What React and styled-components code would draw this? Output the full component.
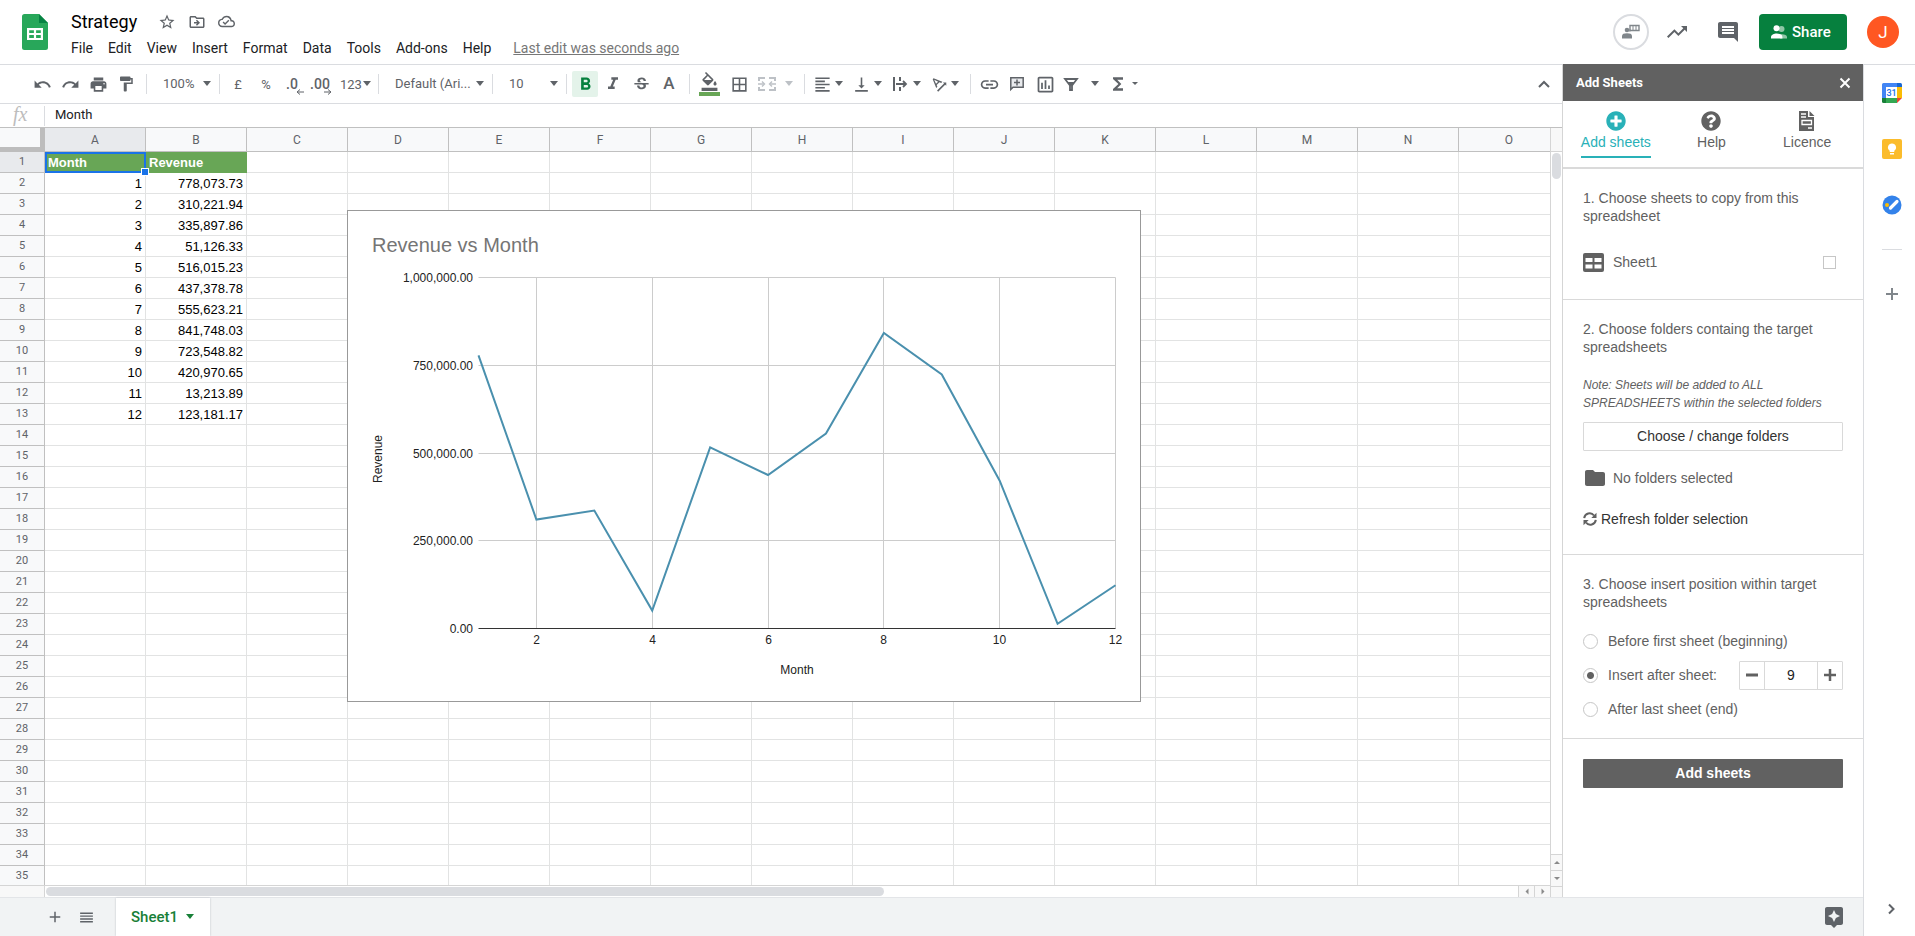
import React, { useState } from "react";
import styled, { createGlobalStyle, css } from "styled-components";
import {
  MdAdd,
  MdAssistant,
  MdBorderAll,
  MdComment,
  MdFormatAlignLeft,
  MdFormatBold,
  MdFormatColorFill,
  MdFormatItalic,
  MdFormatPaint,
  MdFunctions,
  MdInsertLink,
  MdOutlineCloudDone,
  MdOutlineDriveFileMove,
  MdOutlineInsertChart,
  MdPrint,
  MdRedo,
  MdReorder,
  MdStarBorder,
  MdStrikethroughS,
  MdTextRotationAngleup,
  MdTrendingUp,
  MdUndo,
  MdVerticalAlignBottom,
  MdFolder,
} from "react-icons/md";
import { FaPlusCircle, FaQuestionCircle } from "react-icons/fa";

const revenue = [
  778073.73, 310221.94, 335897.86, 51126.33, 516015.23, 437378.78, 555623.21,
  841748.03, 723548.82, 420970.65, 13213.89, 123181.17,
];

const menus = [
  "File",
  "Edit",
  "View",
  "Insert",
  "Format",
  "Data",
  "Tools",
  "Add-ons",
  "Help",
];

const columns = "ABCDEFGHIJKLMNO".split("");
const rows = Array.from({ length: 35 }, (_, i) => i + 1);

const formatMoney = (value) =>
  value.toLocaleString("en-GB", {
    minimumFractionDigits: 2,
    maximumFractionDigits: 2,
  });

export default function App() {
  return (
    <Page>
      <GlobalStyle />
      <Header />
      <Body>
        <Workspace>
          <Panels>
            <Editor>
              <Toolbar />
              <FormulaBar>
                <Fx htmlFor="formula">fx</Fx>
                <FormulaInput id="formula" defaultValue="Month" />
              </FormulaBar>
              <Sheet />
            </Editor>
            <AddSheets />
          </Panels>
          <BottomBar>
            <BottomButton aria-label="Add sheet">
              <MdAdd size={18} />
            </BottomButton>
            <BottomButton aria-label="All sheets">
              <MdReorder size={17} />
            </BottomButton>
            <SheetTab>
              Sheet1
              <Caret />
            </SheetTab>
            <ExploreButton aria-label="Explore">
              <MdAssistant size={24} />
            </ExploreButton>
          </BottomBar>
        </Workspace>
        <AppRail />
      </Body>
    </Page>
  );
}

function Header() {
  return (
    <TopBar>
      <SheetsLogo />
      <Titles>
        <TitleRow>
          <DocTitle>Strategy</DocTitle>
          <PlainButton aria-label="Star">
            <MdStarBorder size={18} />
          </PlainButton>
          <PlainButton aria-label="Move">
            <MdOutlineDriveFileMove size={18} />
          </PlainButton>
          <PlainButton aria-label="Document status">
            <MdOutlineCloudDone size={17} />
          </PlainButton>
        </TitleRow>
        <MenuRow>
          {menus.map((menu) => (
            <MenuButton key={menu}>{menu}</MenuButton>
          ))}
          <LastEdit href="#history">Last edit was seconds ago</LastEdit>
        </MenuRow>
      </Titles>
      <HeaderActions>
        <PresentButton aria-label="Join a call">
          <svg width="20" height="16" viewBox="0 0 20 16">
            <circle cx="6" cy="6" r="2.3" fill="#80868b" />
            <path d="M1 14.500V12c0-2 2-2.700 5-2.700s5 .7 5 2.700v2.500z" fill="#80868b" />
            <path d="M9 1.500h9v5h-9z" fill="none" stroke="#80868b" strokeWidth="1.400" />
            <path d="M12 2v4M15 2v4" stroke="#80868b" />
            <path d="M8.500 5v3l2-1.500z" fill="#80868b" />
          </svg>
        </PresentButton>
        <PlainButton aria-label="Activity">
          <MdTrendingUp size={24} />
        </PlainButton>
        <PlainButton aria-label="Comments">
          <MdComment size={24} />
        </PlainButton>
        <ShareButton>
          <svg width="16" height="14" viewBox="0 0 16 14">
            <circle cx="10.500" cy="4" r="3" fill="#8fc6a6" />
            <path d="M9 13.500V9.500c3-.8 7 .2 7 2.500v1.500z" fill="#8fc6a6" />
            <circle cx="5.500" cy="3.300" r="3" fill="#fff" />
            <path d="M0 13.500V12c0-2.300 3-3.500 5.700-3.500s5.700 1.200 5.700 3.500v1.500z" fill="#fff" />
          </svg>
          Share
        </ShareButton>
        <UserAvatar>J</UserAvatar>
      </HeaderActions>
    </TopBar>
  );
}

function SheetsLogo() {
  return (
    <svg width="26" height="36" viewBox="0 0 26 36">
      <path d="M2.500 0H17l9 9v24.500a2.500 2.500 0 0 1-2.500 2.500h-21A2.500 2.500 0 0 1 0 33.500v-31A2.500 2.500 0 0 1 2.500 0z" fill="#28a75a" />
      <path d="M17 0l9 9h-9z" fill="#078343" />
      <path d="M5 14h16v12H5zm2.200 2.200v2.800h4.700v-2.800zm6.900 0v2.800h4.700v-2.800zm-6.900 4.900v2.800h4.700v-2.800zm6.900 0v2.800h4.700v-2.800z" fill="#fff" fillRule="evenodd" />
    </svg>
  );
}

function Caret() {
  return (
    <CaretIcon width="10" height="6" viewBox="0 0 10 6">
      <path d="M1 0h8L5 5z" />
    </CaretIcon>
  );
}

function Toolbar() {
  const [bold, setBold] = useState(true);

  return (
    <Tools>
      <Tool aria-label="Undo">
        <MdUndo size={19} />
      </Tool>
      <Tool aria-label="Redo">
        <MdRedo size={19} />
      </Tool>
      <Tool aria-label="Print">
        <MdPrint size={19} />
      </Tool>
      <Tool aria-label="Paint format">
        <MdFormatPaint size={18} />
      </Tool>
      <Separator />
      <Picker $width={60}>
        <select aria-label="Zoom">
          <option>100%</option>
        </select>
        <Caret />
      </Picker>
      <Separator />
      <Tool aria-label="Format as currency">£</Tool>
      <Tool aria-label="Format as percent">%</Tool>
      <Tool aria-label="Decrease decimal places">
        <Decimal>.0</Decimal>
        <DecimalArrow width="8" height="6" viewBox="0 0 8 6">
          <path d="M8 3H2M4 0.500L1 3l3 2.500" />
        </DecimalArrow>
      </Tool>
      <Tool aria-label="Increase decimal places">
        <Decimal>.00</Decimal>
        <DecimalArrow width="8" height="6" viewBox="0 0 8 6">
          <path d="M0 3h6M4 .5L7 3L4 5.500" />
        </DecimalArrow>
      </Tool>
      <Tool $width={34} aria-label="More formats">
        123
        <Caret />
      </Tool>
      <Separator />
      <Picker $width={101}>
        <select aria-label="Font">
          <option>Default (Ari...</option>
        </select>
        <Caret />
      </Picker>
      <Separator />
      <Picker $width={61}>
        <select aria-label="Font size">
          <option>10</option>
        </select>
        <Caret />
      </Picker>
      <Separator />
      <Tool $active={bold} aria-label="Bold" onClick={() => setBold(!bold)}>
        <MdFormatBold size={21} />
      </Tool>
      <Tool aria-label="Italic">
        <MdFormatItalic size={20} />
      </Tool>
      <Tool aria-label="Strikethrough">
        <MdStrikethroughS size={19} />
      </Tool>
      <Tool aria-label="Text colour">
        <TextColour>A</TextColour>
      </Tool>
      <Separator />
      <Tool $width={28} aria-label="Fill colour">
        <FillColour>
          <MdFormatColorFill size={19} />
        </FillColour>
      </Tool>
      <Tool $width={28} aria-label="Borders">
        <MdBorderAll size={19} />
      </Tool>
      <Tool $width={42} $faded aria-label="Merge cells">
        <svg width="18" height="16" viewBox="0 0 18 16" fill="none" stroke="currentColor" strokeWidth="2">
          <path d="M1 5V2h6M11 2h6v3M1 11v3h6M11 14h6v-3" />
          <path d="M0 8h6M18 8h-6" strokeWidth="1.600" />
          <path d="M4 5.500L6.500 8 4 10.500M14 5.500L11.500 8l2.500 2.500" strokeWidth="1.400" />
        </svg>
        <Caret />
      </Tool>
      <Separator />
      <Tool $width={37} aria-label="Horizontal align">
        <MdFormatAlignLeft size={19} />
        <Caret />
      </Tool>
      <Tool $width={37} aria-label="Vertical align">
        <MdVerticalAlignBottom size={19} />
        <Caret />
      </Tool>
      <Tool $width={37} aria-label="Text wrapping">
        <svg width="18" height="16" viewBox="0 0 18 16" fill="none" stroke="currentColor" strokeWidth="2">
          <path d="M3 1v14M9 1v4M9 11v4" />
          <path d="M5 8h10M12 5l3 3-3 3" strokeWidth="1.800" />
        </svg>
        <Caret />
      </Tool>
      <Tool $width={36} aria-label="Text rotation">
        <MdTextRotationAngleup size={19} />
        <Caret />
      </Tool>
      <Separator />
      <Tool aria-label="Insert link">
        <MdInsertLink size={21} />
      </Tool>
      <Tool aria-label="Insert comment">
        <svg width="16" height="16" viewBox="0 0 16 16" fill="none" stroke="currentColor" strokeWidth="1.500">
          <path d="M1.800 13.500V1.800h12.400v9.400H4z" fill="#e8eaed" />
          <path d="M8 3.500v6M5 6.500h6" />
        </svg>
      </Tool>
      <Tool aria-label="Insert chart">
        <MdOutlineInsertChart size={21} />
      </Tool>
      <Tool $width={43} aria-label="Filter">
        <svg width="16" height="14" viewBox="0 0 16 14" fill="none" stroke="currentColor" strokeWidth="1.800">
          <path d="M2 2h12l-5 6.500v4.500h-2V8.500z" />
          <path d="M4.500 5h7L8 9.500z" fill="currentColor" stroke="none" />
        </svg>
        <Caret />
      </Tool>
      <Tool $width={36} aria-label="Functions">
        <MdFunctions size={20} />
        <svg width="6" height="4" viewBox="0 0 6 4">
          <path d="M0 0h6L3 3z" fill="currentColor" />
        </svg>
      </Tool>
      <CollapseButton aria-label="Hide the menus">
        <svg width="12" height="8" viewBox="0 0 12 8" fill="none" stroke="currentColor" strokeWidth="2">
          <path d="M1 7l5-5 5 5" />
        </svg>
      </CollapseButton>
    </Tools>
  );
}

function Sheet() {
  const getCell = (column, row) => {
    if (row === 1 && column === "A") {
      return (
        <HeadingCell key={column} $selected>
          Month
          <FillHandle />
        </HeadingCell>
      );
    }
    if (row === 1 && column === "B") {
      return <HeadingCell key={column}>Revenue</HeadingCell>;
    }
    const index = row - 2;
    if (index < 0 || index >= revenue.length) return <Cell key={column} />;
    if (column === "A") return <Cell key={column}>{row - 1}</Cell>;
    if (column === "B") {
      return <Cell key={column}>{formatMoney(revenue[index])}</Cell>;
    }
    return <Cell key={column} />;
  };

  return (
    <SheetArea>
      <GridView>
        <Grid>
          <thead>
            <tr>
              <Corner aria-label="Select all" />
              {columns.map((column) => (
                <ColumnHead key={column} $selected={column === "A"}>
                  {column}
                </ColumnHead>
              ))}
            </tr>
          </thead>
          <tbody>
            {rows.map((row) => (
              <tr key={row}>
                <RowHead $selected={row === 1}>{row}</RowHead>
                {columns.map((column) => getCell(column, row))}
              </tr>
            ))}
          </tbody>
        </Grid>
        <RevenueChart />
      </GridView>
      <VerticalScroll>
        <ScrollHead />
        <VerticalThumb />
        <ScrollButton aria-label="Scroll up">
          <Arrow $turn={180} />
        </ScrollButton>
        <ScrollButton aria-label="Scroll down">
          <Arrow $turn={0} />
        </ScrollButton>
      </VerticalScroll>
      <HorizontalScroll>
        <ScrollGutter />
        <HorizontalTrack>
          <HorizontalThumb />
        </HorizontalTrack>
        <ScrollButton $flat aria-label="Scroll left">
          <Arrow $turn={90} />
        </ScrollButton>
        <ScrollButton $flat aria-label="Scroll right">
          <Arrow $turn={-90} />
        </ScrollButton>
      </HorizontalScroll>
      <ScrollCorner />
    </SheetArea>
  );
}

function RevenueChart() {
  const left = 131.5;
  const right = 768.5;
  const top = 67.5;
  const bottom = 418.5;
  const getX = (month) => left + ((month - 1) * (right - left)) / 11;
  const getY = (value) => bottom - (value * (bottom - top)) / 1000000;
  const points = revenue
    .map((value, index) => `${getX(index + 1)},${getY(value)}`)
    .join(" ");

  return (
    <ChartCard>
      <svg width="792" height="490" viewBox="1 1 792 490">
        <ChartTitle x="25" y="42">
          Revenue vs Month
        </ChartTitle>
        {[250000, 500000, 750000, 1000000].map((value) => {
          const y = Math.floor(getY(value)) + 0.5;
          return (
            <g key={value}>
              <path d={`M${left} ${y}H${right}`} stroke="#ccc" />
              <ChartLabel x="126" y={y + 4} textAnchor="end">
                {formatMoney(value)}
              </ChartLabel>
            </g>
          );
        })}
        {[2, 4, 6, 8, 10, 12].map((month) => {
          const x = Math.floor(getX(month)) + 0.5;
          return (
            <g key={month}>
              <path d={`M${x} ${top}V${bottom}`} stroke="#ccc" />
              <ChartLabel x={x} y="434" textAnchor="middle">
                {month}
              </ChartLabel>
            </g>
          );
        })}
        <path d={`M${left} ${bottom}H${right}`} stroke="#333" />
        <ChartLabel x="126" y={bottom + 4} textAnchor="end">
          {formatMoney(0)}
        </ChartLabel>
        <polyline points={points} fill="none" stroke="#4a90ae" strokeWidth="2" />
        <ChartLabel x="450" y="464" textAnchor="middle">
          Month
        </ChartLabel>
        <ChartLabel transform="translate(35 249) rotate(-90)" textAnchor="middle">
          Revenue
        </ChartLabel>
      </svg>
    </ChartCard>
  );
}

function AddSheets() {
  const [position, setPosition] = useState("after");
  const [count, setCount] = useState(9);

  return (
    <Sidebar>
      <SidebarHeader>
        Add Sheets
        <PlainButton $light aria-label="Close">
          <svg width="16" height="16" viewBox="0 0 16 16">
            <path d="M3.500 3.500l9 9M12.500 3.500l-9 9" stroke="#fff" strokeWidth="2" />
          </svg>
        </PlainButton>
      </SidebarHeader>
      <SidebarTabs>
        <SidebarTab $active>
          <FaPlusCircle size={20} />
          <span>Add sheets</span>
        </SidebarTab>
        <SidebarTab>
          <FaQuestionCircle size={20} />
          <span>Help</span>
        </SidebarTab>
        <SidebarTab>
          <svg width="16" height="20" viewBox="0 0 16 20">
            <path d="M0 0h9v6h6v14H0z" fill="#616161" />
            <path d="M10.500 0l5 5h-5z" fill="#616161" />
            <path d="M2 3h5M2 6h5M9 17h4" stroke="#fff" strokeWidth="1.300" />
            <path d="M3 9.500h9.500v4H3z" fill="none" stroke="#fff" strokeWidth="1.300" />
          </svg>
          <span>Licence</span>
        </SidebarTab>
      </SidebarTabs>
      <Section>
        <SectionTitle>1. Choose sheets to copy from this spreadsheet</SectionTitle>
        <SheetOption>
          <svg width="21" height="19" viewBox="0 0 21 19">
            <rect width="21" height="19" rx="2" fill="#616161" />
            <path d="M2.500 5h7v4h-7zM11.500 5h7v4h-7zM2.500 11.500h7v4h-7zM11.500 11.500h7v4h-7z" fill="#fff" />
          </svg>
          Sheet1
          <CheckBox type="checkbox" />
        </SheetOption>
      </Section>
      <Section>
        <SectionTitle>
          2. Choose folders containg the target spreadsheets
        </SectionTitle>
        <Note>
          Note: Sheets will be added to ALL SPREADSHEETS within the selected
          folders
        </Note>
        <FolderButton>Choose / change folders</FolderButton>
        <FolderStatus>
          <MdFolder size={24} />
          No folders selected
        </FolderStatus>
        <RefreshButton>
          <svg width="14" height="14" viewBox="0 0 14 14" fill="none" stroke="#616161" strokeWidth="2">
            <path d="M1.200 6.200A5.500 5.500 0 0 1 11 3.500M12.800 7.800A5.500 5.500 0 0 1 3 10.500" />
            <path d="M13.500.8V6H8.300zM.5 13.200V8h5.200z" fill="#616161" stroke="none" />
          </svg>
          Refresh folder selection
        </RefreshButton>
      </Section>
      <Section>
        <SectionTitle>
          3. Choose insert position within target spreadsheets
        </SectionTitle>
        <Positions>
          <PositionRow>
            <label>
              <Radio
                name="position"
                checked={position === "first"}
                onChange={() => setPosition("first")}
              />
              Before first sheet (beginning)
            </label>
          </PositionRow>
          <PositionRow>
            <label>
              <Radio
                name="position"
                checked={position === "after"}
                onChange={() => setPosition("after")}
              />
              Insert after sheet:
            </label>
            <Stepper>
              <button aria-label="Decrease" onClick={() => setCount(count - 1)}>
                <svg width="12" height="12" viewBox="0 0 12 12">
                  <path d="M0 6h12" stroke="#616161" strokeWidth="3" />
                </svg>
              </button>
              <input
                aria-label="Sheet number"
                value={count}
                onChange={(e) => setCount(Number(e.target.value) || 0)}
              />
              <button aria-label="Increase" onClick={() => setCount(count + 1)}>
                <svg width="12" height="12" viewBox="0 0 12 12">
                  <path d="M0 6h12M6 0v12" stroke="#616161" strokeWidth="2.500" />
                </svg>
              </button>
            </Stepper>
          </PositionRow>
          <PositionRow>
            <label>
              <Radio
                name="position"
                checked={position === "last"}
                onChange={() => setPosition("last")}
              />
              After last sheet (end)
            </label>
          </PositionRow>
        </Positions>
      </Section>
      <SubmitArea>
        <SubmitButton>Add sheets</SubmitButton>
      </SubmitArea>
    </Sidebar>
  );
}

function AppRail() {
  return (
    <Rail>
      <RailButton aria-label="Calendar">
        <svg width="20" height="20" viewBox="0 0 20 20">
          <path d="M0 1.500A1.500 1.500 0 0 1 1.500 0H15v4H4v11H0z" fill="#4285f4" />
          <path d="M15 0h3.500A1.500 1.500 0 0 1 20 1.500V4h-5z" fill="#1967d2" />
          <path d="M15 4h5v11h-5z" fill="#fbbc04" />
          <path d="M4 15h11v5H4z" fill="#34a853" />
          <path d="M0 15h4v5H1.500A1.500 1.500 0 0 1 0 18.500z" fill="#188038" />
          <path d="M15 15h5l-5 5z" fill="#ea4335" />
          <path d="M4 4h11v11H4z" fill="#fff" />
          <text x="9.500" y="13" textAnchor="middle" fontSize="9" fontWeight="500" fontFamily="Roboto, sans-serif" fill="#1a73e8">
            31
          </text>
        </svg>
      </RailButton>
      <RailButton aria-label="Keep">
        <svg width="20" height="20" viewBox="0 0 20 20">
          <rect width="20" height="20" rx="2" fill="#fbbc2c" />
          <path d="M10 4.500a4 4 0 0 0-2.300 7.300V13h4.600v-1.200A4 4 0 0 0 10 4.500z" fill="#fff" />
          <path d="M8 14h4v1.500H8z" fill="#fff" />
        </svg>
      </RailButton>
      <RailButton aria-label="Tasks">
        <svg width="20" height="20" viewBox="0 0 20 20">
          <circle cx="10" cy="10" r="9.500" fill="#3382ea" />
          <circle cx="5" cy="10" r="2" fill="#fbbc04" />
          <path d="M8.500 13L15 6.500" stroke="#fff" strokeWidth="3.200" strokeLinecap="round" />
        </svg>
      </RailButton>
      <RailLine />
      <RailButton aria-label="Get add-ons">
        <svg width="12" height="12" viewBox="0 0 12 12">
          <path d="M0 6h12M6 0v12" stroke="#80868b" strokeWidth="2" />
        </svg>
      </RailButton>
      <RailButton $end aria-label="Hide side panel">
        <svg width="8" height="12" viewBox="0 0 8 12" fill="none" stroke="#5f6368" strokeWidth="2">
          <path d="M1 1.500L5.500 6 1 10.500" />
        </svg>
      </RailButton>
    </Rail>
  );
}

const roboto = "Roboto, 'Liberation Sans', sans-serif";
const arial = "'Liberation Sans', Arial, sans-serif";

const GlobalStyle = createGlobalStyle`
  * {
    box-sizing: border-box;
  }

  body {
    margin: 0;
    background: #fff;
    font-family: ${roboto};
    overflow: hidden;
  }

  button,
  input,
  select {
    margin: 0;
    padding: 0;
    border: 0;
    background: none;
    color: inherit;
    font: inherit;
  }

  button {
    cursor: pointer;
  }
`;

const Page = styled.div`
  display: flex;
  flex-direction: column;
  height: 100vh;
`;

const Body = styled.div`
  flex: 1;
  display: flex;
  min-height: 0;
`;

const Workspace = styled.div`
  flex: 1;
  display: flex;
  flex-direction: column;
  min-width: 0;
`;

const Panels = styled.div`
  flex: 1;
  display: flex;
  min-height: 0;
`;

const Editor = styled.div`
  flex: 1;
  display: flex;
  flex-direction: column;
  min-width: 0;
`;

const TopBar = styled.header`
  display: flex;
  align-items: center;
  padding: 0 16px 0 22px;
  height: 65px;
  border-bottom: 1px solid #dadce0;
`;

const Titles = styled.div`
  flex: 1;
  margin-left: 23px;
  padding-top: 3px;
`;

const TitleRow = styled.div`
  display: flex;
  align-items: center;
  gap: 12px;
  height: 28px;
`;

const DocTitle = styled.h1`
  margin: 0 9px 0 0;
  font-size: 18px;
  font-weight: 400;
  color: #000;
`;

const MenuRow = styled.nav`
  display: flex;
  align-items: center;
  gap: 15px;
  height: 24px;
`;

const MenuButton = styled.button`
  font-size: 14px;
  color: #202124;
`;

const LastEdit = styled.a`
  margin-left: 7px;
  font-size: 14px;
  color: #777;
`;

const PlainButton = styled.button`
  display: inline-flex;
  color: ${({ $light }) => ($light ? "#fff" : "#5f6368")};
`;

const HeaderActions = styled.div`
  display: flex;
  align-items: center;

  ${PlainButton} + ${PlainButton} {
    margin: 0 19px 0 27px;
  }
`;

const PresentButton = styled.button`
  display: grid;
  place-items: center;
  width: 36px;
  height: 36px;
  margin-right: 16px;
  border: 2px solid #dadce0;
  border-radius: 50%;
`;

const ShareButton = styled.button`
  display: flex;
  align-items: center;
  gap: 5px;
  width: 88px;
  height: 36px;
  padding-left: 12px;
  border-radius: 4px;
  font-size: 15px;
  font-weight: 500;
  color: #fff;
  background: #06803e;
`;

const UserAvatar = styled.span`
  display: grid;
  place-items: center;
  width: 32px;
  height: 32px;
  margin-left: 20px;
  border-radius: 50%;
  font-size: 17px;
  color: #fff;
  background: #ff5722;
`;

const CaretIcon = styled.svg`
  flex-shrink: 0;
  fill: currentColor;
`;

const Tools = styled.div`
  display: flex;
  align-items: center;
  gap: 2px;
  height: 39px;
  padding-left: 29px;
  border-bottom: 1px solid #dadce0;
  color: #5f6368;
`;

const Tool = styled.button`
  position: relative;
  display: flex;
  flex-shrink: 0;
  align-items: center;
  justify-content: ${({ $width }) => ($width > 28 ? "space-between" : "center")};
  width: ${({ $width }) => $width || 26}px;
  height: 26px;
  padding-left: ${({ $width }) => ($width > 28 ? 3 : 0)}px;
  padding-right: ${({ $width }) => ($width > 34 ? 3 : 0)}px;
  border-radius: 2px;
  font-size: 13px;
  color: ${({ $faded }) => ($faded ? "#bdc1c6" : "inherit")};

  ${({ $active }) =>
    $active &&
    css`
      color: #06803e;
      background: #e4f3ea;
    `}
`;

const Decimal = styled.span`
  padding-right: 4px;
  font-size: 14px;
  font-weight: 500;
`;

const DecimalArrow = styled.svg`
  position: absolute;
  right: 3px;
  bottom: 2px;
  fill: none;
  stroke: currentColor;
`;

const TextColour = styled.span`
  padding-bottom: 3px;
  font-size: 17px;
  font-weight: 500;
`;

const FillColour = styled.span`
  display: flex;
  justify-content: center;
  width: 21px;
  height: 24px;
  border-bottom: 4px solid #68a656;
`;

const Separator = styled.span`
  flex-shrink: 0;
  width: 1px;
  height: 20px;
  margin: 0 3px 0 5px;
  background: #dadce0;
`;

const Picker = styled.span`
  display: flex;
  flex-shrink: 0;
  align-items: center;
  width: ${({ $width }) => $width}px;
  padding-left: 11px;

  select {
    flex: 1;
    min-width: 0;
    height: 24px;
    padding-bottom: 2px;
    appearance: none;
    font-size: 13px;
  }
`;

const CollapseButton = styled(PlainButton)`
  margin: 0 12px 0 auto;
`;

const FormulaBar = styled.div`
  display: flex;
  align-items: center;
  height: 24px;
  border-bottom: 1px solid #c0c0c0;
`;

const Fx = styled.label`
  width: 45px;
  padding: 0 0 4px 13px;
  border-right: 1px solid #dadce0;
  font-family: "Liberation Serif", serif;
  font-size: 20px;
  font-style: italic;
  line-height: 16px;
  color: #bdbdbd;
`;

const FormulaInput = styled.input`
  flex: 1;
  padding: 0 0 2px 10px;
  font-size: 13px;
  color: #202124;
`;

const SheetArea = styled.div`
  flex: 1;
  display: grid;
  grid-template: minmax(0, 1fr) 11px / minmax(0, 1fr) 11px;
  min-height: 0;
`;

const GridView = styled.div`
  position: relative;
  overflow: hidden;
  border-right: 1px solid #d5d5d5;
  border-bottom: 1px solid #d5d5d5;
`;

const Grid = styled.table`
  table-layout: fixed;
  width: 1560px;
  border-spacing: 0;
`;

const headCell = css`
  padding: 0;
  border-right: 1px solid #c0c0c0;
  border-bottom: 1px solid #c0c0c0;
  font-size: 12px;
  font-weight: 400;
  color: #5f6368;
  background: ${({ $selected }) => ($selected ? "#e8eaed" : "#f8f9fa")};
`;

const Corner = styled.th`
  width: 45px;
  padding: 0;
  border-right: 5px solid #bdbdbd;
  border-bottom: 5px solid #bdbdbd;
  background: #f8f9fa;
`;

const ColumnHead = styled.th`
  ${headCell}
  height: 24px;
`;

const RowHead = styled.th`
  ${headCell}
  padding-bottom: 2px;
  font-size: 11px;
`;

const Cell = styled.td`
  height: 21px;
  padding: 0 3px 1px;
  border-right: 1px solid #e2e3e3;
  border-bottom: 1px solid #e2e3e3;
  font-family: ${arial};
  font-size: 13px;
  line-height: 17px;
  text-align: right;
  vertical-align: bottom;
  color: #000;
`;

const HeadingCell = styled(Cell)`
  position: relative;
  border-color: #68a656;
  font-weight: 700;
  text-align: left;
  color: #fff;
  background: #68a656;

  ${({ $selected }) =>
    $selected &&
    css`
      border-color: #1a73e8;
      box-shadow: inset 2px 2px #1a73e8, inset -1px -1px #1a73e8;
    `}
`;

const FillHandle = styled.span`
  position: absolute;
  right: -4px;
  bottom: -4px;
  z-index: 1;
  width: 8px;
  height: 8px;
  border: 1px solid #fff;
  background: #1a73e8;
`;

const ChartCard = styled.figure`
  position: absolute;
  top: 82px;
  left: 347px;
  display: flex;
  margin: 0;
  border: 1px solid #999;
  background: #fff;
`;

const ChartTitle = styled.text`
  font-family: ${arial};
  font-size: 20px;
  fill: #757575;
`;

const ChartLabel = styled.text`
  font-family: ${arial};
  font-size: 12px;
  fill: #222;
`;

const VerticalScroll = styled.div`
  display: flex;
  flex-direction: column;
`;

const ScrollHead = styled.div`
  height: 24px;
  border-bottom: 1px solid #d5d5d5;
  background: #f8f8f8;
`;

const VerticalThumb = styled.div`
  width: 9px;
  height: 26px;
  margin: 1px 1px auto;
  border-radius: 5px;
  background: #dadce0;
`;

const ScrollButton = styled.button`
  display: grid;
  place-items: center;
  flex-shrink: 0;
  width: ${({ $flat }) => ($flat ? 16 : 11)}px;
  height: ${({ $flat }) => ($flat ? 11 : 16)}px;
  border: 0 solid #d5d5d5;
  border-width: ${({ $flat }) => ($flat ? "0 0 0 1px" : "1px 0 0")};
  background: #f8f8f8;
`;

const Arrow = styled.i`
  border: 3px solid transparent;
  border-top-color: #8a8a8a;
  border-bottom-width: 0;
  transform: rotate(${({ $turn }) => $turn}deg);
`;

const HorizontalScroll = styled.div`
  display: flex;
  border-right: 1px solid #d5d5d5;
`;

const ScrollGutter = styled.div`
  width: 45px;
  border-right: 1px solid #d5d5d5;
  background: #f8f8f8;
`;

const HorizontalTrack = styled.div`
  flex: 1;
  padding: 1px;
`;

const HorizontalThumb = styled.div`
  width: 57%;
  height: 9px;
  border-radius: 5px;
  background: #dadce0;
`;

const ScrollCorner = styled.div`
  border-top: 1px solid #d5d5d5;
  background: #f8f8f8;
`;

const BottomBar = styled.footer`
  display: flex;
  align-items: center;
  height: 39px;
  padding: 0 17px 0 42px;
  border-top: 1px solid #e3e5e8;
  color: #5f6368;
  background: #f1f3f4;
`;

const BottomButton = styled.button`
  display: grid;
  place-items: center;
  width: 26px;
  height: 26px;
  margin-right: 5px;
`;

const SheetTab = styled.button`
  display: flex;
  align-items: center;
  gap: 7px;
  height: 38px;
  margin-left: 12px;
  padding: 0 15px;
  font-size: 15px;
  font-weight: 500;
  color: #188038;
  background: #fff;
  box-shadow: 0 0 2px #bdc1c6;
`;

const ExploreButton = styled(PlainButton)`
  margin-left: auto;
`;

const Sidebar = styled.aside`
  width: 301px;
  margin-top: -1px;
  border-left: 1px solid #d5d5d5;
  font-family: ${arial};
  font-size: 14px;
  line-height: 18px;
  color: #616161;
  background: #fff;
`;

const SidebarHeader = styled.div`
  display: flex;
  align-items: center;
  justify-content: space-between;
  height: 37px;
  padding: 0 10px 0 13px;
  font-family: ${roboto};
  font-size: 13px;
  font-weight: 700;
  color: #fff;
  background: #616161;
`;

const SidebarTabs = styled.div`
  display: grid;
  grid-template-columns: repeat(3, 1fr);
  height: 68px;
  padding: 10px 8px 0 5px;
  border-bottom: 2px solid #dadada;
`;

const SidebarTab = styled.button`
  display: flex;
  flex-direction: column;
  align-items: center;
  color: ${({ $active }) => ($active ? "#29b1b8" : "inherit")};

  span {
    padding: 2px 0 5px;
    border-bottom: 2px solid ${({ $active }) => ($active ? "#29b1b8" : "transparent")};
  }
`;

const Section = styled.section`
  padding: 20px 20px 0;
  border-bottom: 1px solid #d9d9d9;
`;

const SectionTitle = styled.h2`
  margin: 0;
  font-size: 14px;
  font-weight: 400;
`;

const SheetOption = styled.label`
  display: flex;
  align-items: center;
  gap: 9px;
  height: 74px;
`;

const CheckBox = styled.input`
  appearance: none;
  width: 13px;
  height: 13px;
  margin: 0 7px 0 auto;
  border: 1px solid #c6c6c6;
`;

const Note = styled.p`
  margin: 20px 0 10px;
  font-size: 12px;
  font-style: italic;
`;

const FolderButton = styled.button`
  width: 100%;
  height: 29px;
  padding-bottom: 1px;
  border: 1px solid #d9d9d9;
  border-radius: 1px;
  color: #333;
`;

const FolderStatus = styled.div`
  display: flex;
  align-items: center;
  gap: 6px;
  height: 54px;
`;

const RefreshButton = styled.button`
  display: flex;
  align-items: center;
  gap: 4px;
  height: 28px;
  margin-bottom: 21px;
  color: #333;
`;

const Positions = styled.div`
  padding: 13px 0 12px;
`;

const PositionRow = styled.div`
  display: flex;
  align-items: center;
  justify-content: space-between;
  height: 34px;

  label {
    display: flex;
    align-items: center;
    gap: 10px;
  }
`;

const Radio = styled.input.attrs({ type: "radio" })`
  appearance: none;
  width: 15px;
  height: 15px;
  border: 1px solid #c6c6c6;
  border-radius: 50%;

  &:checked {
    background: radial-gradient(circle, #616161 3px, transparent 4px);
  }
`;

const Stepper = styled.div`
  display: flex;
  height: 29px;
  border: 1px solid #d9d9d9;
  border-radius: 1px;

  button {
    display: grid;
    place-items: center;
    width: 24px;
  }

  input {
    width: 54px;
    border: 1px solid #d9d9d9;
    border-width: 0 1px;
    text-align: center;
    color: #222;
  }
`;

const SubmitArea = styled.div`
  padding: 20px;
`;

const SubmitButton = styled.button`
  width: 100%;
  height: 29px;
  padding-bottom: 1px;
  border-radius: 1px;
  font-weight: 700;
  color: #fff;
  background: #616161;
`;

const Rail = styled.aside`
  display: flex;
  flex-direction: column;
  align-items: center;
  width: 52px;
  padding: 10px 0 9px 5px;
  border-left: 1px solid #dadce0;
`;

const RailButton = styled.button`
  display: grid;
  place-items: center;
  width: 36px;
  height: 36px;
  margin-bottom: 20px;

  ${({ $end }) =>
    $end &&
    css`
      margin: auto 0 0;
    `}
`;

const RailLine = styled.span`
  width: 20px;
  height: 1px;
  margin: 6px 0 26px;
  background: #dadce0;
`;
